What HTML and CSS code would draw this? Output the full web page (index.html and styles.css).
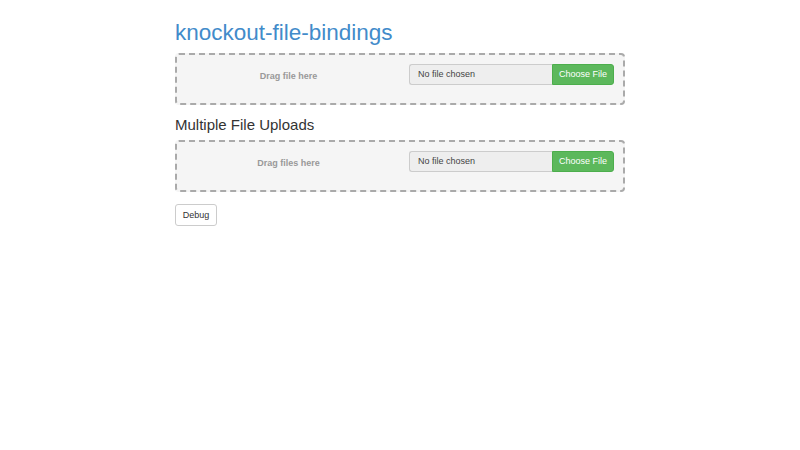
FILE: index.html
```html
<!DOCTYPE html>
<html>
<head>
<meta charset="utf-8">
<link rel="stylesheet" href="styles.css">
</head>
<body>
<div class="container">
  <h1 class="title">knockout-file-bindings</h1>
  <div class="dropzone">
    <div class="drop-label">Drag file here</div>
    <div class="drop-input">
      <div class="input-group">
        <span class="file-name">No file chosen</span>
        <span class="choose-btn">Choose File</span>
      </div>
    </div>
  </div>
  <h2 class="subtitle">Multiple File Uploads</h2>
  <div class="dropzone">
    <div class="drop-label">Drag files here</div>
    <div class="drop-input">
      <div class="input-group">
        <span class="file-name">No file chosen</span>
        <span class="choose-btn">Choose File</span>
      </div>
    </div>
  </div>
  <button class="debug-btn">Debug</button>
</div>
</body>
</html>
```
FILE: styles.css
```css
* { box-sizing: border-box; }
html, body { margin: 0; padding: 0; background: #fff; }
body {
  font-family: "Liberation Sans", Arial, sans-serif;
  color: #333;
  font-size: 9px;
}
.container {
  width: 450px;
  margin: 0 auto;
  padding-top: 18px;
}
.title {
  margin: 0 0 5px 0;
  font-size: 22.5px;
  font-weight: normal;
  color: #428bca;
  line-height: 30px;
}
.subtitle {
  margin: 11px 0 6px 0;
  font-size: 15px;
  font-weight: normal;
  color: #333;
  line-height: 18px;
}
.dropzone {
  display: grid;
  grid-template-columns: 1fr 1fr;
  align-items: center;
  height: 52px;
  border: 2px dashed #aaa;
  border-radius: 4px;
  background: #f5f5f5;
}
.drop-label {
  text-align: center;
  font-weight: bold;
  color: #999;
  font-size: 9px;
  margin-top: -6px;
}
.drop-input {
  padding: 0 9px;
  margin-top: -10px;
}
.input-group {
  display: flex;
  height: 21px;
}
.file-name {
  flex: 1;
  display: flex;
  align-items: center;
  padding-left: 8px;
  background: #eee;
  border: 1px solid #ccc;
  border-right: none;
  border-radius: 3px 0 0 3px;
  color: #444;
  font-size: 9px;
}
.choose-btn {
  width: 62px;
  display: flex;
  align-items: center;
  justify-content: center;
  background: #5cb85c;
  border: 1px solid #4cae4c;
  border-radius: 0 3px 3px 0;
  color: #fff;
  font-size: 9px;
}
.debug-btn {
  display: block;
  margin-top: 12px;
  height: 22px;
  width: 42px;
  padding: 0;
  background: #fff;
  border: 1px solid #ccc;
  border-radius: 3px;
  font-family: "Liberation Sans", Arial, sans-serif;
  font-size: 9px;
  color: #333;
}
```
